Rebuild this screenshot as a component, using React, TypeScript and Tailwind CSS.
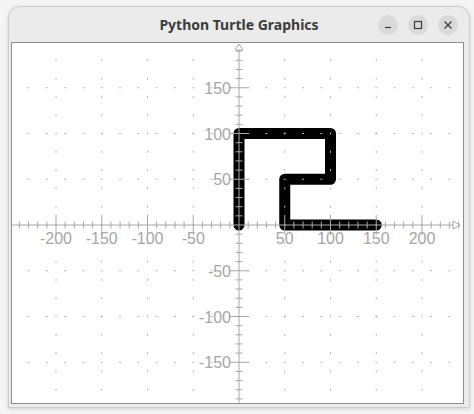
import React from "react";

// turtle canvas maps units -> page pixels
const S = 0.915;
const OX = 239;
const OY = 225;
const px = (u: number) => OX + u * S;
const py = (u: number) => OY - u * S;

const range = (from: number, to: number, step: number) => {
  const out: number[] = [];
  for (let v = from; v <= to; v += step) out.push(v);
  return out;
};

const GRID = "#b4b4b4";
const AXIS = "#a8a8a8";

const TurtleCanvas = () => {
  const xMajors = [-200, -150, -100, -50, 50, 100, 150, 200];
  const yMajors = [-150, -100, -50, 50, 100, 150];
  const path = [
    [0, 0],
    [0, 100],
    [100, 100],
    [100, 50],
    [50, 50],
    [50, 0],
    [150, 0],
  ]
    .map(([x, y], i) => `${i ? "L" : "M"}${px(x)} ${py(y)}`)
    .join(" ");

  return (
    <svg width={451} height={360} viewBox="12 43 451 360" className="block">
      <path
        d={path}
        fill="none"
        stroke="#000"
        strokeWidth={11}
        strokeLinecap="round"
        strokeLinejoin="round"
      />

      {/* dotted grid, vertical lines */}
      {xMajors.map((x) =>
        range(-200, 200, 20).map((y) => (
          <line
            key={`v${x}_${y}`}
            x1={px(x)}
            x2={px(x)}
            y1={py(y) - 1}
            y2={py(y) + 1}
            stroke={GRID}
            strokeWidth={1}
          />
        )),
      )}
      {/* dotted grid, horizontal lines */}
      {yMajors.map((y) =>
        range(-250, 250, 20).map((x) => (
          <line
            key={`h${y}_${x}`}
            x1={px(x) - 1}
            x2={px(x) + 1}
            y1={py(y)}
            y2={py(y)}
            stroke={GRID}
            strokeWidth={1}
          />
        )),
      )}

      {/* axes */}
      <line x1={12} x2={453} y1={OY} y2={OY} stroke={AXIS} strokeWidth={1} />
      <line x1={OX} x2={OX} y1={50} y2={403} stroke={AXIS} strokeWidth={1} />
      <polygon
        points={`${OX},44 ${OX - 4},50 ${OX + 4},50`}
        fill="#fff"
        stroke={AXIS}
        strokeWidth={1}
      />
      <polygon
        points={`460,${OY} 453,${OY - 4} 453,${OY + 4}`}
        fill="#fff"
        stroke={AXIS}
        strokeWidth={1}
      />

      {range(-250, 240, 10).map((x) =>
        x === 0 ? null : (
          <line
            key={`tx${x}`}
            x1={px(x)}
            x2={px(x)}
            y1={OY - (x % 50 === 0 ? 10 : 3.5)}
            y2={OY + (x % 50 === 0 ? 10 : 3.5)}
            stroke={AXIS}
            strokeWidth={1}
          />
        ),
      )}
      {range(-190, 190, 10).map((y) =>
        y === 0 ? null : (
          <line
            key={`ty${y}`}
            x1={OX - (y % 50 === 0 ? 10 : 3.5)}
            x2={OX + (y % 50 === 0 ? 10 : 3.5)}
            y1={py(y)}
            y2={py(y)}
            stroke={AXIS}
            strokeWidth={1}
          />
        ),
      )}

      {xMajors.map((x) => (
        <text
          key={`lx${x}`}
          x={px(x)}
          y={OY + 19}
          textAnchor="middle"
          fontFamily="'Liberation Sans', Arial, sans-serif"
          fontSize={16}
          fill="#a6a6a6"
        >
          {x}
        </text>
      ))}
      {yMajors.map((y) => (
        <text
          key={`ly${y}`}
          x={OX - 8}
          y={py(y) + 6}
          textAnchor="end"
          fontFamily="'Liberation Sans', Arial, sans-serif"
          fontSize={16}
          fill="#a6a6a6"
        >
          {y}
        </text>
      ))}
    </svg>
  );
};

const WinButton = ({ children }: { children: React.ReactNode }) => (
  <div className="w-[20px] h-[20px] rounded-full bg-[#dadada] flex items-center justify-center text-[#3a3a3a]">
    {children}
  </div>
);

export default function App() {
  return (
    <div className="w-[474px] h-[414px] bg-[#f5f5f5] pt-[6px] pl-[8px] pr-[4px] pb-[6px]">
      <div className="h-[402px] w-[462px] flex flex-col rounded-t-[12px] bg-[#ebebeb] border border-[#cdcdcd] shadow-[0_1px_4px_rgba(0,0,0,0.15)]">
        <div className="h-[35px] grid grid-cols-[1fr_auto_1fr] items-center">
          <div />
          <div
            className="text-[14px] font-bold text-[#3c3c3c]"
            style={{ fontFamily: "'Noto Sans', 'Open Sans', sans-serif" }}
          >
            Python Turtle Graphics
          </div>
          <div className="flex justify-end items-center gap-[10px] pr-[11px]">
            <WinButton>
              <svg width="10" height="10" viewBox="0 0 10 10">
                <line x1="2" x2="8" y1="7.5" y2="7.5" stroke="currentColor" strokeWidth="1.2" />
              </svg>
            </WinButton>
            <WinButton>
              <svg width="10" height="10" viewBox="0 0 10 10">
                <rect x="1.5" y="1.5" width="7" height="7" fill="none" stroke="currentColor" strokeWidth="1.2" />
              </svg>
            </WinButton>
            <WinButton>
              <svg width="10" height="10" viewBox="0 0 10 10">
                <path d="M1.5 1.5 L8.5 8.5 M8.5 1.5 L1.5 8.5" stroke="currentColor" strokeWidth="1.2" />
              </svg>
            </WinButton>
          </div>
        </div>
        <div className="pl-[2px] pr-[5px] pb-[3px]">
          <div className="border border-[#8e8e8e] bg-white w-[453px]">
            <TurtleCanvas />
          </div>
        </div>
      </div>
    </div>
  );
}
